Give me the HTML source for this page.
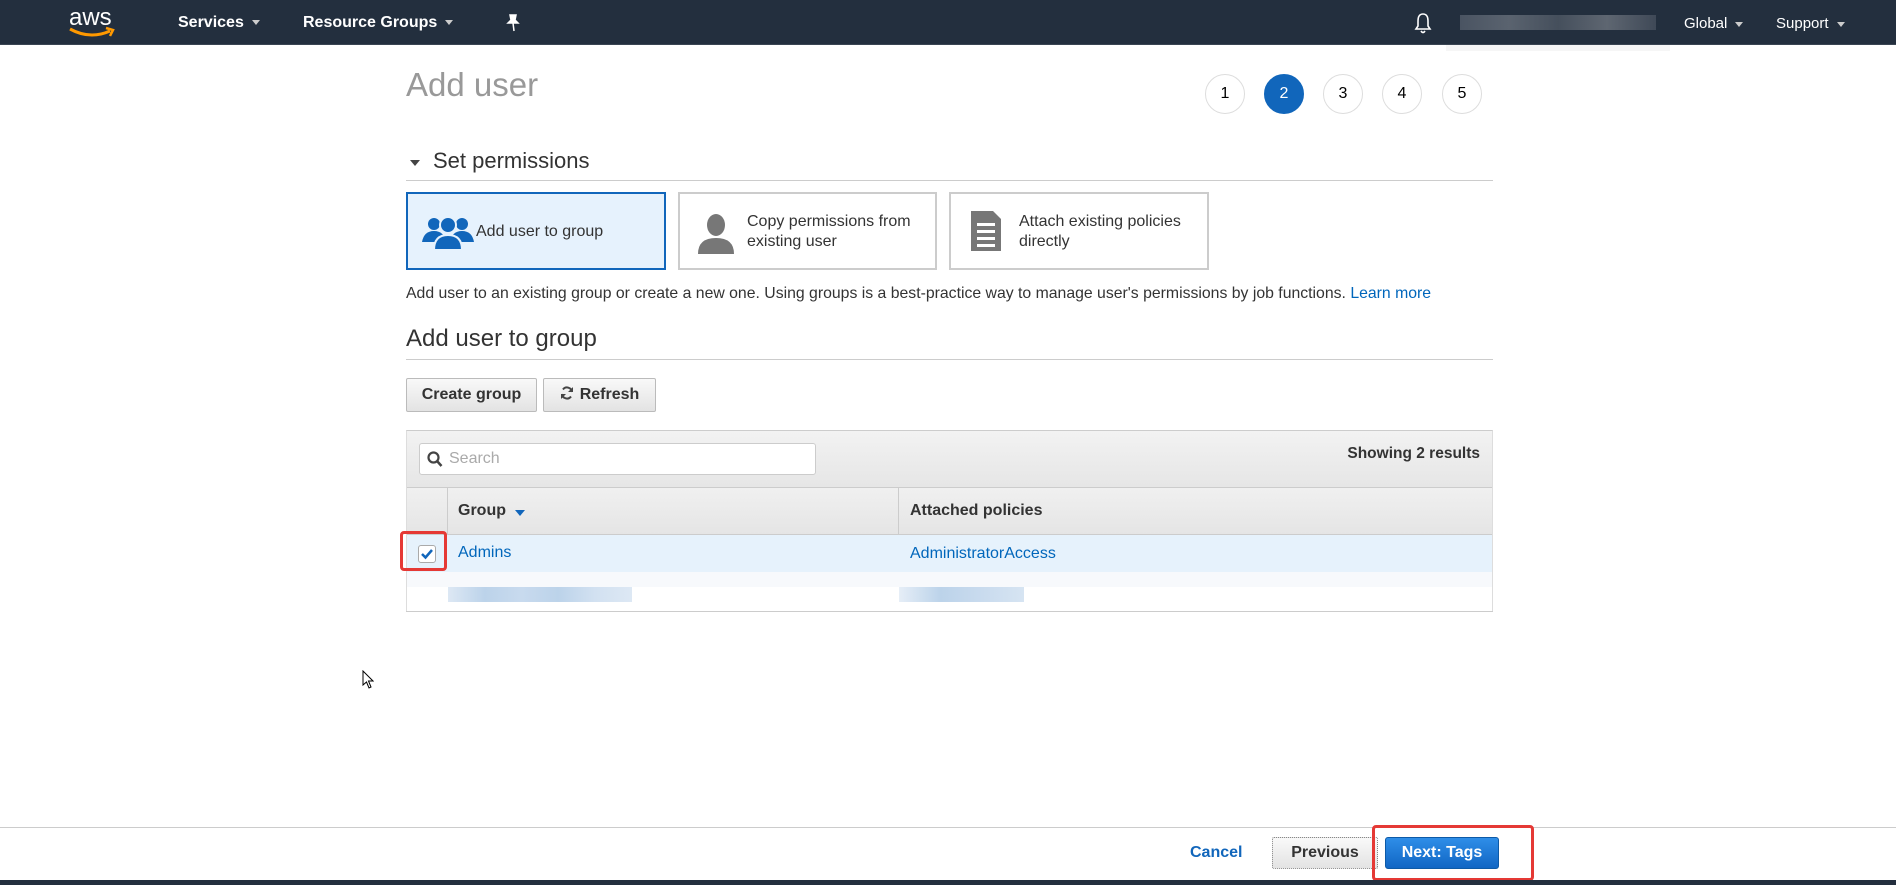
<!DOCTYPE html>
<html><head><meta charset="utf-8"><style>
*{box-sizing:border-box;margin:0;padding:0}
body{width:1896px;height:885px;position:relative;overflow:hidden;background:#fff;font-family:"Liberation Sans",Arial,sans-serif;color:#333}
.abs{position:absolute}
.nav{left:0;top:0;width:1896px;height:45px;background:#232f3e;border-bottom:1px solid #3a4553}
.nav .t{color:#fff;font-size:16px;font-weight:bold;top:14px}
.nav .s{color:#fff;font-size:15px;top:15px}
.caret{display:inline-block;width:0;height:0;border-left:4px solid transparent;border-right:4px solid transparent;border-top:5px solid #ccc;vertical-align:middle;margin-left:8px}
.step{width:40px;height:40px;border-radius:50%;border:1px solid #ddd;top:74px;text-align:center;line-height:38px;font-size:16px;color:#000;background:#fff}
.card{top:192px;height:78px;border:2px solid #ccc;background:#fff;font-size:16px;color:#333}
.btn{border:1px solid #bbb;border-radius:2px;background:linear-gradient(#f9f9f9,#e3e3e3);font-weight:bold;font-size:16px;text-align:center;color:#333}
</style></head><body>
<div class="abs nav">
  <div class="abs" style="left:69px;top:4px;color:#fff;font-size:24px;letter-spacing:0px">aws</div>
  <svg class="abs" style="left:68px;top:26px" width="48" height="14" viewBox="0 0 48 14"><path d="M2 3 Q22 14 42 5" stroke="#f90" stroke-width="3" fill="none"/><path d="M38 2 L45 4 L42 10" stroke="#f90" stroke-width="2.5" fill="none"/></svg>
  <div class="abs t" style="left:178px">Services<span class="caret"></span></div>
  <div class="abs t" style="left:303px">Resource Groups<span class="caret"></span></div>
  <svg class="abs" style="left:506px;top:14px" width="14" height="18" viewBox="0 0 14 18"><path d="M4 1 L10 1 L9 6 L12 9 L2 9 L5 6 Z M7 9 L8 17" stroke="#fff" stroke-width="1.5" fill="#fff"/></svg>
  <svg class="abs" style="left:1414px;top:12px" width="18" height="22" viewBox="0 0 18 22"><path d="M9 2 C4 2 4 7 4 10 L4 14 L2 17 L16 17 L14 14 L14 10 C14 7 14 2 9 2 Z M7 19 Q9 22 11 19" stroke="#fff" stroke-width="1.6" fill="none"/></svg>
  <div class="abs" style="left:1460px;top:15px;width:196px;height:15px;background:linear-gradient(90deg,#4a5462,#5a636f,#454f5c,#5e6671,#3f4957)"></div>
  <div class="abs s" style="left:1684px">Global<span class="caret"></span></div>
  <div class="abs s" style="left:1776px">Support<span class="caret"></span></div>
</div>
<div class="abs" style="left:1446px;top:45px;width:224px;height:6px;background:#f6f6f6"></div>

<div class="abs" style="left:406px;top:66px;font-size:33px;color:#999">Add user</div>
<div class="abs step" style="left:1205px">1</div>
<div class="abs step" style="left:1264px;background:#1166bb;border-color:#1166bb;color:#fff">2</div>
<div class="abs step" style="left:1323px">3</div>
<div class="abs step" style="left:1382px">4</div>
<div class="abs step" style="left:1442px">5</div>

<div class="abs" style="left:410px;top:160px;width:0;height:0;border-left:5px solid transparent;border-right:5px solid transparent;border-top:6px solid #444"></div>
<div class="abs" style="left:433px;top:148px;font-size:22px;color:#333">Set permissions</div>
<div class="abs" style="left:406px;top:180px;width:1087px;height:1px;background:#ccc"></div>

<div class="abs card" style="left:406px;width:260px;border-color:#1166bb;background:#e6f2fd">
  <svg class="abs" style="left:14px;top:20px" width="52" height="36" viewBox="0 0 52 36"><g fill="#1166bb"><circle cx="12" cy="10" r="6"/><circle cx="40" cy="10" r="6"/><path d="M0 28 Q2 17 12 17 Q22 17 24 28 Z"/><path d="M28 28 Q30 17 40 17 Q50 17 52 28 Z"/><circle cx="26" cy="11" r="8" stroke="#e6f2fd" stroke-width="2"/><path d="M12 36 Q12 21 26 21 Q40 21 40 36 Z" stroke="#e6f2fd" stroke-width="2"/></g></svg>
  <div class="abs" style="left:68px;top:29px">Add user to group</div>
</div>
<div class="abs card" style="left:678px;width:259px">
  <svg class="abs" style="left:18px;top:20px" width="36" height="40" viewBox="0 0 36 40"><g fill="#777"><ellipse cx="18" cy="11" rx="9" ry="11"/><path d="M0 40 Q0 24 18 24 Q36 24 36 40 Z"/></g></svg>
  <div class="abs" style="left:67px;top:18px;line-height:20px">Copy permissions from<br>existing user</div>
</div>
<div class="abs card" style="left:949px;width:260px">
  <svg class="abs" style="left:20px;top:17px" width="30" height="40" viewBox="0 0 30 40"><path d="M0 0 L22 0 L30 8 L30 40 L0 40 Z" fill="#777"/><g fill="#fff"><rect x="6" y="12" width="18" height="3"/><rect x="6" y="19" width="18" height="3"/><rect x="6" y="26" width="18" height="3"/><rect x="6" y="33" width="18" height="3"/></g></svg>
  <div class="abs" style="left:68px;top:18px;line-height:20px">Attach existing policies<br>directly</div>
</div>

<div class="abs" style="left:406px;top:285px;font-size:15.8px;color:#333;white-space:nowrap">Add user to an existing group or create a new one. Using groups is a best-practice way to manage user's permissions by job functions. <span style="color:#0066bb">Learn more</span></div>

<div class="abs" style="left:406px;top:325px;font-size:24px;color:#333">Add user to group</div>
<div class="abs" style="left:406px;top:359px;width:1087px;height:1px;background:#ccc"></div>

<div class="abs btn" style="left:406px;top:378px;width:131px;height:34px;line-height:32px">Create group</div>
<div class="abs btn" style="left:543px;top:378px;width:113px;height:34px;line-height:32px"><svg width="14" height="14" viewBox="0 0 14 14" style="vertical-align:-1px;margin-right:6px"><path d="M12 6 A5 5 0 0 0 3 3.5 M2 8 A5 5 0 0 0 11 10.5" stroke="#444" stroke-width="2" fill="none"/><path d="M13 1 L13 6 L8 6 Z M1 13 L1 8 L6 8 Z" fill="#444"/></svg>Refresh</div>

<div class="abs" style="left:406px;top:430px;width:1087px;height:182px;border-top:1px solid #ccc;border-left:1px solid #ddd;border-right:1px solid #ddd">
  <div class="abs" style="left:0;top:0;width:1085px;height:57px;background:linear-gradient(#f2f2f2,#e6e6e6);border-bottom:1px solid #ccc"></div>
  <div class="abs" style="left:12px;top:12px;width:397px;height:32px;background:#fff;border:1px solid #ccc;border-radius:3px">
    <svg class="abs" style="left:7px;top:7px" width="16" height="17" viewBox="0 0 16 17"><circle cx="6.5" cy="6.5" r="5" stroke="#444" stroke-width="2.2" fill="none"/><path d="M10 10 L14.5 15" stroke="#444" stroke-width="2.5"/></svg>
    <div class="abs" style="left:29px;top:6px;font-size:16px;color:#aaa">Search</div>
  </div>
  <div class="abs" style="right:12px;top:14px;font-size:15.5px;font-weight:bold;color:#333">Showing 2 results</div>
  <div class="abs" style="left:0;top:57px;width:1085px;height:47px;background:linear-gradient(#f0f0f0,#e5e5e5);border-bottom:1px solid #ccc"></div>
  <div class="abs" style="left:40px;top:57px;width:1px;height:47px;background:#ccc"></div>
  <div class="abs" style="left:491px;top:57px;width:1px;height:47px;background:#ccc"></div>
  <div class="abs" style="left:51px;top:71px;font-size:16px;font-weight:bold;color:#333">Group</div>
  <div class="abs" style="left:108px;top:79px;width:0;height:0;border-left:5px solid transparent;border-right:5px solid transparent;border-top:6px solid #1166bb"></div>
  <div class="abs" style="left:503px;top:71px;font-size:16px;font-weight:bold;color:#333">Attached policies</div>
  <div class="abs" style="left:0;top:104px;width:1085px;height:37px;background:#e6f2fc"></div>
  <div class="abs" style="left:11px;top:114px;width:18px;height:18px;background:#fff;border:1px solid #aaa;border-radius:3px"><svg width="16" height="16" viewBox="0 0 16 16"><path d="M3 8 L6.5 11.5 L13 4" stroke="#1166bb" stroke-width="2.5" fill="none"/></svg></div>
  <div class="abs" style="left:51px;top:113px;font-size:16px;color:#0066bb">Admins</div>
  <div class="abs" style="left:503px;top:114px;font-size:16px;color:#0066bb">AdministratorAccess</div>
  <div class="abs" style="left:0;top:141px;width:1085px;height:15px;background:#f7f9fc"></div>
  <div class="abs" style="left:41px;top:156px;width:184px;height:15px;background:linear-gradient(90deg,#dde8f4,#bcd3ea,#c8daee,#bcd3ea,#d2e1f1,#dde8f4)"></div>
  <div class="abs" style="left:492px;top:156px;width:125px;height:15px;background:linear-gradient(90deg,#e6eef7,#bcd3ea,#c9dbee,#d6e4f2)"></div>
</div>
<div class="abs" style="left:406px;top:611px;width:1087px;height:1px;background:#ccc"></div>
<div class="abs" style="left:400px;top:531px;width:47px;height:40px;border:3px solid #e53935;border-radius:4px"></div>

<svg class="abs" style="left:362px;top:670px" width="12" height="20" viewBox="0 0 12 20"><path d="M1 1 L1 15 L4.5 12 L7 18 L9 17 L6.5 11 L11 11 Z" fill="#fff" stroke="#000" stroke-width="1"/></svg>

<div class="abs" style="left:0;top:827px;width:1896px;height:1px;background:#ccc"></div>
<div class="abs" style="left:1190px;top:844px;font-size:16px;font-weight:bold;color:#1166bb">Cancel</div>
<div class="abs btn" style="left:1272px;top:837px;width:106px;height:32px;line-height:30px;border:1px dotted #888">Previous</div>
<div class="abs" style="left:1385px;top:837px;width:114px;height:32px;line-height:30px;border:1px solid #0d5aa7;border-radius:3px;background:linear-gradient(#2f8ee8,#1166c4);color:#fff;font-weight:bold;font-size:16px;text-align:center">Next: Tags</div>
<div class="abs" style="left:1372px;top:825px;width:162px;height:56px;border:3px solid #e53935;border-radius:4px"></div>
<div class="abs" style="left:0;top:880px;width:1896px;height:5px;background:#232f3e"></div>
</body></html>
